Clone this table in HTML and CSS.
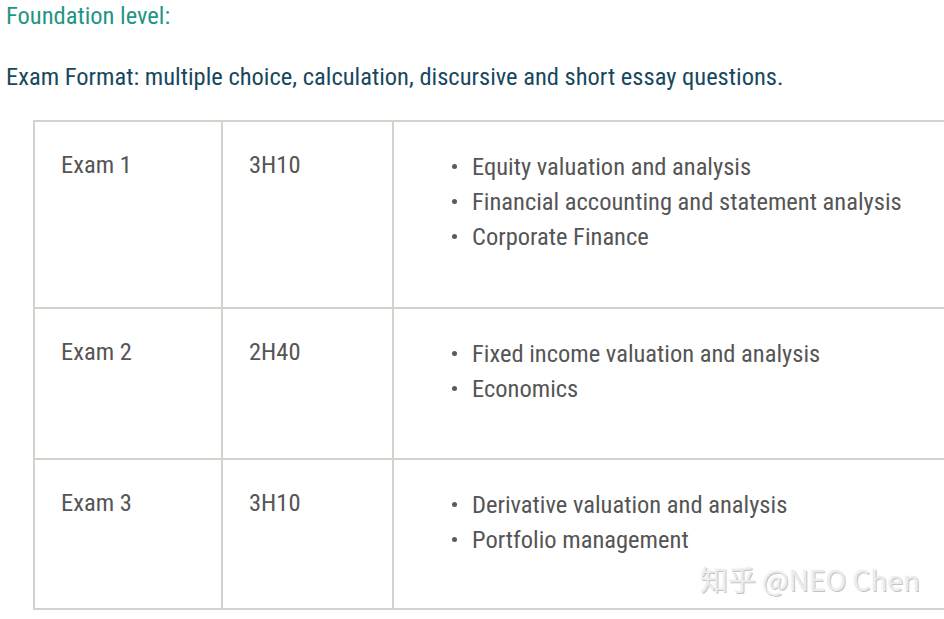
FILE: index.html
```html
<!DOCTYPE html>
<html>
<head>
<meta charset="utf-8">
<link rel="stylesheet" href="styles.css">
</head>
<body>
<p class="level">Foundation level:</p>
<p class="format">Exam Format: multiple choice, calculation, discursive and short essay questions.</p>
<table class="exams">
  <tr class="r1">
    <td class="c-name">Exam 1</td>
    <td class="c-time">3H10</td>
    <td class="c-topics"><ul><li>Equity valuation and analysis</li><li>Financial accounting and statement analysis</li><li>Corporate Finance</li></ul></td>
  </tr>
  <tr class="r2">
    <td class="c-name">Exam 2</td>
    <td class="c-time">2H40</td>
    <td class="c-topics"><ul><li>Fixed income valuation and analysis</li><li>Economics</li></ul></td>
  </tr>
  <tr class="r3">
    <td class="c-name">Exam 3</td>
    <td class="c-time">3H10</td>
    <td class="c-topics"><ul><li>Derivative valuation and analysis</li><li>Portfolio management</li></ul></td>
  </tr>
</table>
<div class="watermark">知乎 @NEO Chen</div>
</body>
</html>
```
FILE: styles.css
```css
html, body { margin: 0; padding: 0; background: #fff; overflow: hidden; }
body {
  font-family: Roboto, "Noto Sans", sans-serif;
  font-stretch: condensed;
  width: 944px; height: 619px; position: relative;
  overflow: hidden;
}
.level {
  margin: 0; padding: 2px 0 0 6px;
  font-size: 24.5px; line-height: 28px; color: #1f9584;
}
.format {
  margin: 0; padding: 33px 0 0 6px;
  font-size: 24.5px; line-height: 28px; color: #17485e;
}
.exams {
  margin: 29px 0 0 33px;
  border-collapse: collapse;
  width: 1000px;
  font-size: 24.5px; color: #555;
}
.exams td {
  border: 2px solid #d3d2cb;
  vertical-align: top;
  padding: 25px 0 0 26px;
  line-height: 35px;
}
.r1 td { height: 187px; box-sizing: border-box; }
.r2 td { height: 151px; box-sizing: border-box; }
.r3 td { height: 150px; box-sizing: border-box; }
.c-name { width: 188px; }
.c-time { width: 171px; }
.exams td.c-topics { padding: 27px 0 0 78px; }
.exams ul { margin: 0; padding: 0; list-style: none; }
.exams li { position: relative; }
.exams li::before {
  content: ""; position: absolute; left: -20px; top: 15px;
  width: 5px; height: 5px; border-radius: 50%; background: #5a5a5a;
}
.watermark {
  position: absolute; left: 700px; top: 559px;
  font-family: "Noto Sans CJK SC", sans-serif;
  font-stretch: normal;
  font-size: 28px; color: #ececec;
  text-shadow: 1px 1px 0 #c4c4c4, -1px -1px 0 #fafafa;
}
```
